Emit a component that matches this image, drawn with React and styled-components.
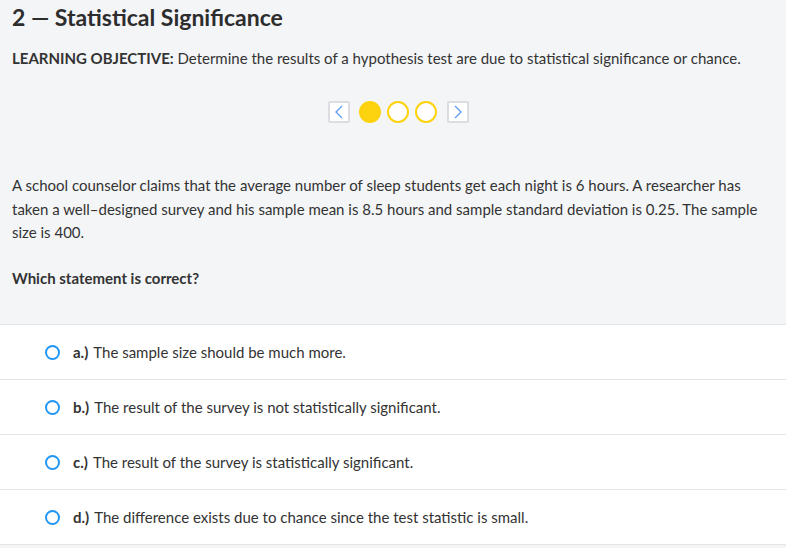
import styled, { createGlobalStyle } from "styled-components";

const GlobalStyle = createGlobalStyle`
  body {
    margin: 0;
    background: #f4f5f7;
    font-family: "Lato", "Open Sans", sans-serif;
    color: #333;
  }
`;

const Page = styled.div`
  width: 786px;
  min-height: 548px;
  background: #f4f5f7;
`;

const Header = styled.div`
  padding: 4px 12px 0;
`;

const Title = styled.h1`
  margin: 0;
  font-size: 23px;
  font-weight: 700;
  line-height: 26px;
  color: #2d2d2d;
`;

const Objective = styled.p`
  margin: 19px 0 0;
  font-size: 15px;
  line-height: 18px;
  color: #333;

  b {
    font-weight: 700;
  }
`;

const Nav = styled.div`
  display: flex;
  justify-content: center;
  align-items: center;
  gap: 6px;
  margin-top: 34px;
  padding-left: 10px;
`;

const ArrowButton = styled.button`
  width: 22px;
  height: 22px;
  padding: 0;
  border: 2px solid #dcdde0;
  border-radius: 2px;
  background: #fff;
  display: flex;
  align-items: center;
  justify-content: center;
  margin: ${(p) => (p.$side === "left" ? "0 3px 0 0" : "0 0 0 4px")};
`;

const Dot = styled.span`
  width: 22px;
  height: 22px;
  box-sizing: border-box;
  border-radius: 50%;
  border: 2.5px solid #fdd20e;
  background: ${(p) => (p.$active ? "#fdd20e" : "#fff")};
`;

const Question = styled.div`
  padding: 0 12px;
  margin-top: 51px;
  font-size: 15px;
  line-height: 23.5px;
  color: #333;
`;

const Prompt = styled.p`
  margin: 22px 0 0;
  font-weight: 700;
  font-size: 15px;
`;

const Options = styled.div`
  margin-top: 34px;
  background: #fff;
  border-top: 1px solid #e3e4e6;
`;

const Option = styled.label`
  display: flex;
  align-items: center;
  height: 54px;
  padding-left: 45px;
  border-bottom: 1px solid #e3e4e6;
  font-size: 15px;
  color: #333;
  cursor: pointer;
`;

const Radio = styled.span`
  width: 15px;
  height: 15px;
  box-sizing: border-box;
  border-radius: 50%;
  border: 2.5px solid #2196f3;
  margin-right: 13px;
  flex-shrink: 0;
`;

const Letter = styled.b`
  font-weight: 700;
  margin-right: 5px;
`;

const Chevron = ({ dir }) => (
  <svg width="10" height="14" viewBox="0 0 10 14">
    <path
      d={dir === "left" ? "M8 1 L2 7 L8 13" : "M2 1 L8 7 L2 13"}
      fill="none"
      stroke="#5b9bf0"
      strokeWidth="1.3"
    />
  </svg>
);

const options = [
  ["a.)", "The sample size should be much more."],
  ["b.)", "The result of the survey is not statistically significant."],
  ["c.)", "The result of the survey is statistically significant."],
  ["d.)", "The difference exists due to chance since the test statistic is small."],
];

export default function App() {
  return (
    <Page>
      <GlobalStyle />
      <Header>
        <Title>2 — Statistical Significance</Title>
        <Objective>
          <b>LEARNING OBJECTIVE:</b> Determine the results of a hypothesis test
          are due to statistical significance or chance.
        </Objective>
      </Header>
      <Nav>
        <ArrowButton $side="left">
          <Chevron dir="left" />
        </ArrowButton>
        <Dot $active />
        <Dot />
        <Dot />
        <ArrowButton $side="right">
          <Chevron dir="right" />
        </ArrowButton>
      </Nav>
      <Question>
        A school counselor claims that the average number of sleep students get
        each night is 6 hours. A researcher has taken a well–designed survey and
        his sample mean is 8.5 hours and sample standard deviation is 0.25. The
        sample size is 400.
        <Prompt>Which statement is correct?</Prompt>
      </Question>
      <Options>
        {options.map(([letter, text]) => (
          <Option key={letter}>
            <Radio />
            <Letter>{letter}</Letter>
            {text}
          </Option>
        ))}
      </Options>
    </Page>
  );
}
